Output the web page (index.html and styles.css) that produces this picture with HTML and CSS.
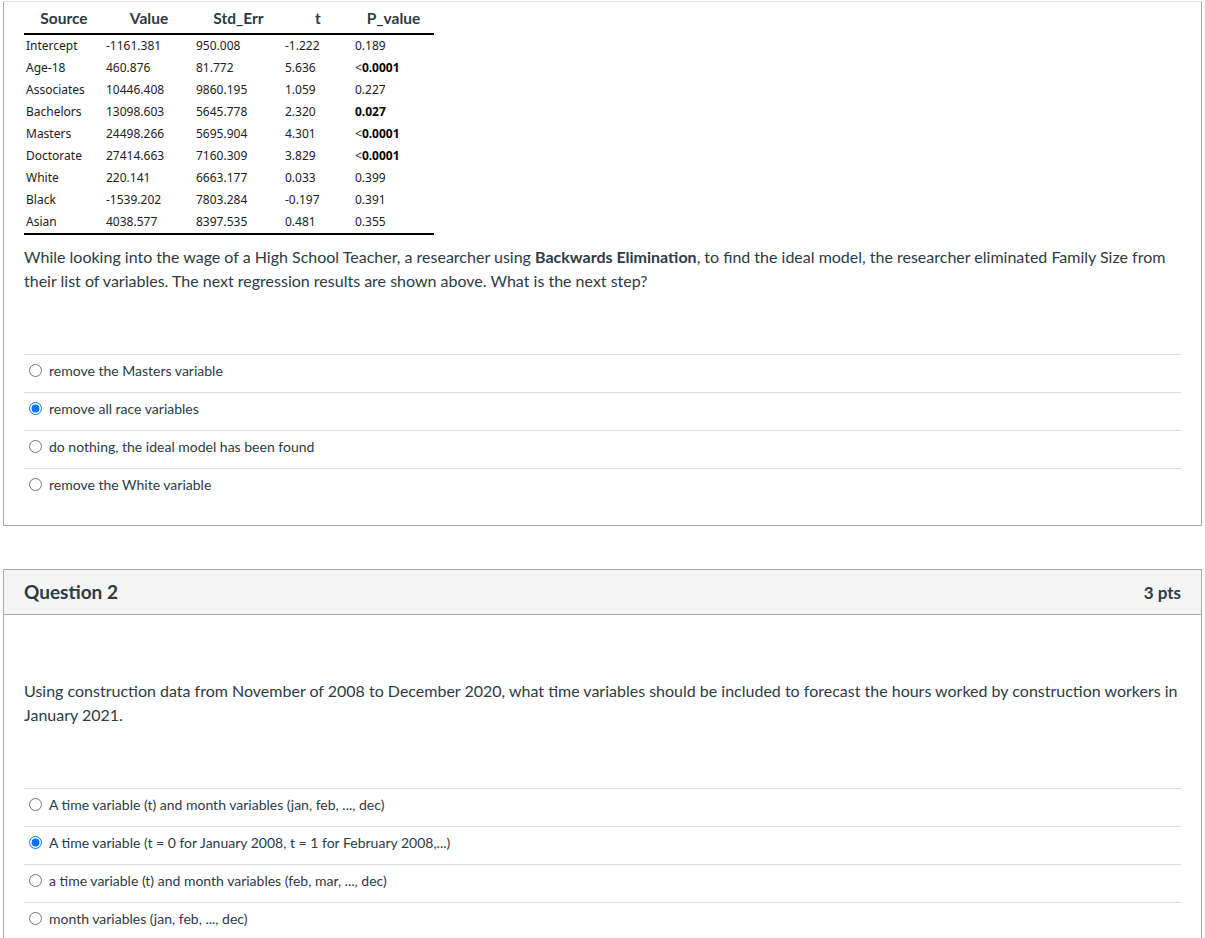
FILE: index.html
```html
<!DOCTYPE html>
<html lang="en">
<head>
<meta charset="utf-8">
<title>Quiz</title>
<link rel="stylesheet" href="styles.css">
</head>
<body>
<div class="question q1">
  <div class="qbody">
    <table class="reg">
      <thead>
        <tr><th class="c1">Source</th><th class="c2">Value</th><th class="c3">Std_Err</th><th class="c4">t</th><th class="c5">P_value</th></tr>
      </thead>
      <tbody>
        <tr><td>Intercept</td><td>-1161.381</td><td>950.008</td><td>-1.222</td><td>0.189</td></tr>
        <tr><td>Age-18</td><td>460.876</td><td>81.772</td><td>5.636</td><td>&lt;<b>0.0001</b></td></tr>
        <tr><td>Associates</td><td>10446.408</td><td>9860.195</td><td>1.059</td><td>0.227</td></tr>
        <tr><td>Bachelors</td><td>13098.603</td><td>5645.778</td><td>2.320</td><td><b>0.027</b></td></tr>
        <tr><td>Masters</td><td>24498.266</td><td>5695.904</td><td>4.301</td><td>&lt;<b>0.0001</b></td></tr>
        <tr><td>Doctorate</td><td>27414.663</td><td>7160.309</td><td>3.829</td><td>&lt;<b>0.0001</b></td></tr>
        <tr><td>White</td><td>220.141</td><td>6663.177</td><td>0.033</td><td>0.399</td></tr>
        <tr><td>Black</td><td>-1539.202</td><td>7803.284</td><td>-0.197</td><td>0.391</td></tr>
        <tr><td>Asian</td><td>4038.577</td><td>8397.535</td><td>0.481</td><td>0.355</td></tr>
      </tbody>
    </table>
    <p class="qtext">While looking into the wage of a High School Teacher, a researcher using <strong>Backwards Elimination</strong>, to find the ideal model, the researcher eliminated Family Size from their list of variables. The next regression results are shown above. What is the next step?</p>
    <div class="answers">
      <label class="answer"><input type="radio" name="a1"><span>remove the Masters variable</span></label>
      <label class="answer"><input type="radio" name="a1" checked><span>remove all race variables</span></label>
      <label class="answer"><input type="radio" name="a1"><span>do nothing, the ideal model has been found</span></label>
      <label class="answer"><input type="radio" name="a1"><span>remove the White variable</span></label>
    </div>
  </div>
</div>

<div class="question q2">
  <div class="qheader">
    <span class="qname">Question 2</span>
    <span class="pts">3 pts</span>
  </div>
  <div class="qbody">
    <p class="qtext q2text">Using construction data from November of 2008 to December 2020, what time variables should be included to forecast the hours worked by construction workers in January 2021.</p>
    <div class="answers">
      <label class="answer"><input type="radio" name="a2"><span>A time variable (t) and month variables (jan, feb, ..., dec)</span></label>
      <label class="answer"><input type="radio" name="a2" checked><span>A time variable (t = 0 for January 2008, t = 1 for February 2008,...)</span></label>
      <label class="answer"><input type="radio" name="a2"><span>a time variable (t) and month variables (feb, mar, ..., dec)</span></label>
      <label class="answer"><input type="radio" name="a2"><span>month variables (jan, feb, ..., dec)</span></label>
    </div>
  </div>
</div>
</body>
</html>
```

FILE: styles.css
```css
html, body {
  margin: 0;
  padding: 0;
  background: #ffffff;
}
body {
  padding: 1px 3px 0 3px;
  font-family: Lato, "Noto Sans", sans-serif;
  color: #2d3b45;
}
.question {
  border: 1px solid #aaaaaa;
  background: #ffffff;
}
.q1 {
  border-top-color: #e2e2e2;
}
.q1 .qbody {
  padding-top: 1px;
}
.q2 {
  margin-top: 43px;
}
.qbody {
  padding: 0 20px 19px 20px;
}
.qheader {
  background: #f5f5f5;
  border-bottom: 1px solid #aaaaaa;
  height: 44px;
  padding: 0 20px;
  display: flex;
  align-items: center;
  justify-content: space-between;
}
.qname {
  font-size: 19px;
  font-weight: 700;
  color: #2d3b45;
  position: relative;
  top: -1px;
}
.pts {
  font-size: 17px;
  font-weight: 700;
  color: #2d3b45;
}
.reg {
  border-collapse: collapse;
  width: 410px;
  table-layout: fixed;
  color: #222;
}
.reg th {
  height: 30px;
  padding: 0;
  font-family: Lato, sans-serif;
  font-size: 15.5px;
  font-weight: 700;
  text-align: center;
  border-bottom: 2px solid #000;
  color: #2d3b45;
}
.reg .c1 { width: 80px; }
.reg .c2 { width: 90px; }
.reg .c3 { width: 89px; }
.reg .c4 { width: 70px; }
.reg .c5 { width: 81px; }
.reg td {
  height: 22px;
  padding: 0 0 0 2px;
  font-family: "Noto Sans", sans-serif;
  font-size: 12px;
  line-height: 22px;
  white-space: nowrap;
}
.reg tbody tr:last-child td {
  border-bottom: 2px solid #000;
}
.reg b {
  font-weight: 700;
  color: #000;
}
.qtext {
  margin: 10px 0 0 0;
  font-size: 16px;
  line-height: 24px;
}
.qtext strong {
  font-weight: 700;
}
.q2text {
  margin-top: 64px;
}
.answers {
  margin-top: 61px;
}
.answer {
  display: flex;
  align-items: center;
  height: 31px;
  padding-bottom: 6px;
  border-top: 1px solid #dddddd;
  font-size: 14px;
  color: #2d3b45;
}
.answer input {
  margin: 0 7px 0 5px;
  width: 13px;
  height: 13px;
}
```
